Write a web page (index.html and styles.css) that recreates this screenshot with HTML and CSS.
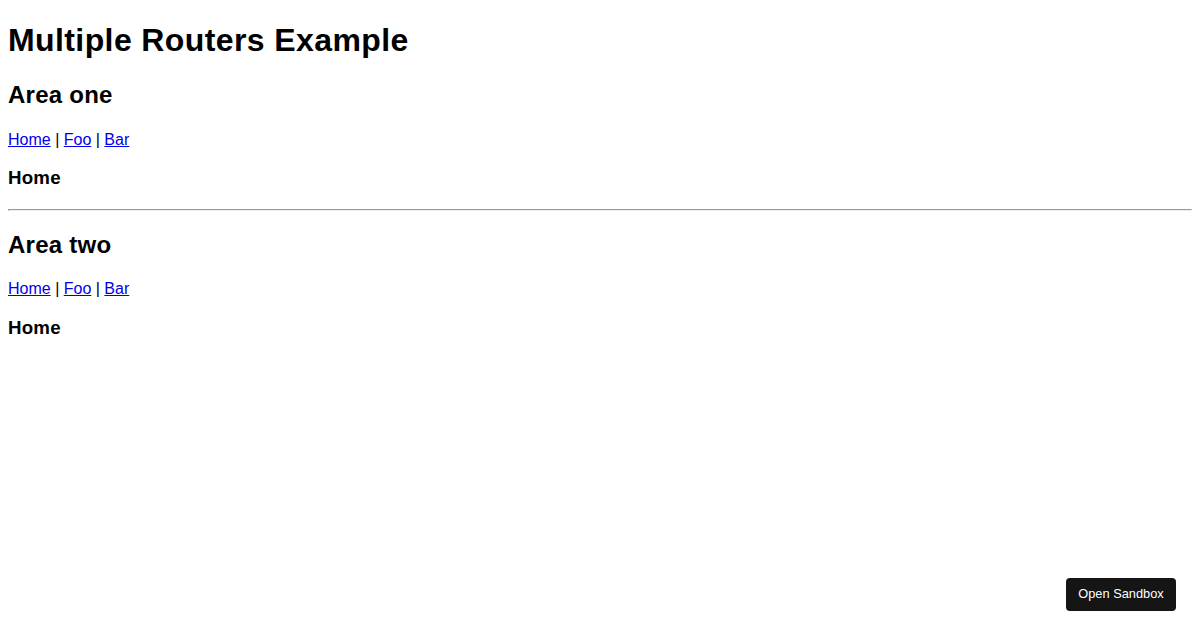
FILE: index.html
```html
<!DOCTYPE HTML>
<html>
<head>
  <title>Multiple Routers Example</title>
  <meta name="viewport" content="width=device-width, initial-scale=1">
  <link rel="stylesheet" href="styles.css">
</head>
<body>
  <div id="root">
    <h1>Multiple Routers Example</h1>
    <div class="area">
      <h2>Area one</h2>
      <p><a href="#/">Home</a> | <a href="#/foo">Foo</a> | <a href="#/bar">Bar</a></p>
      <h3>Home</h3>
    </div>
    <hr>
    <div class="area">
      <h2>Area two</h2>
      <p><a href="#/">Home</a> | <a href="#/foo">Foo</a> | <a href="#/bar">Bar</a></p>
      <h3>Home</h3>
    </div>
  </div>
  <a class="sandbox-btn" href="#">Open Sandbox</a>
</body>
</html>
```

FILE: styles.css
```css
body {
  font-family: "Liberation Sans", Arial, Helvetica, sans-serif;
  line-height: 1.2;
}
h1 {
  margin-top: 13px;
  letter-spacing: 0.4px;
}
h2 {
  letter-spacing: 0.25px;
}
h3 {
  letter-spacing: 0.2px;
}
a {
  color: #0000ee;
}
.sandbox-btn {
  position: fixed;
  right: 24px;
  bottom: 19px;
  width: 110px;
  height: 33px;
  box-sizing: border-box;
  display: flex;
  align-items: center;
  justify-content: center;
  background-color: #151515;
  color: #ffffff;
  font-size: 12.8px;
  line-height: 1;
  text-decoration: none;
  border-radius: 4px;
}
```
